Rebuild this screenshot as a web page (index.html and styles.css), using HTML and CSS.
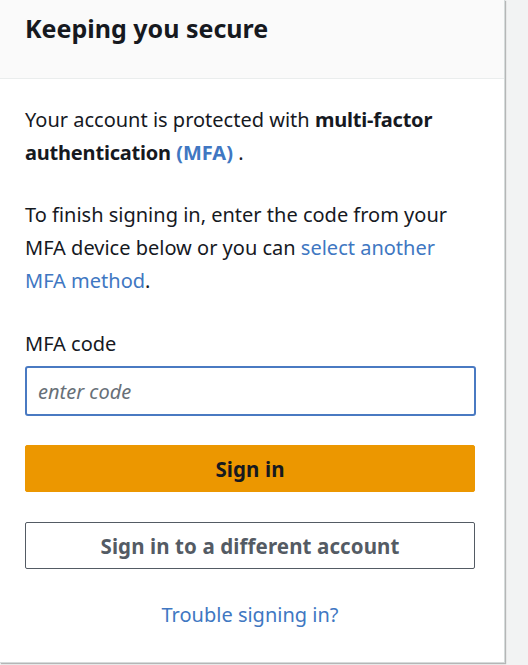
FILE: index.html
```html
<!DOCTYPE html>
<html lang="en">
<head>
<meta charset="utf-8">
<title>Keeping you secure</title>
<link rel="stylesheet" href="styles.css">
</head>
<body>
<div class="card">
  <div class="card-header">
    <h1 class="title">Keeping you secure</h1>
  </div>
  <div class="card-body">
    <p class="text">Your account is protected with <b class="strong">multi-factor authentication</b> <a class="link bold" href="#">(MFA)</a> .</p>
    <p class="text">To finish signing in, enter the code from your MFA device below or you can <a class="link" href="#">select another MFA method</a>.</p>
    <label class="label" for="code">MFA code</label>
    <input id="code" class="input" type="text" placeholder="enter code">
    <button class="btn btn-primary" type="button">Sign in</button>
    <button class="btn btn-secondary" type="button">Sign in to a different account</button>
    <div class="trouble"><a class="link" href="#">Trouble signing in?</a></div>
  </div>
</div>
</body>
</html>
```

FILE: styles.css
```css
html, body {
  margin: 0;
  padding: 0;
}
body {
  background: #f2f3f3;
  font-family: "Noto Sans", "Open Sans", sans-serif;
  color: #16191f;
  width: 528px;
  height: 665px;
  overflow: hidden;
}
.card {
  width: 505px;
  height: 663px;
  box-sizing: border-box;
  background: #ffffff;
  border-right: 1px solid #d5dbdb;
  border-bottom: 1px solid #d5dbdb;
  box-shadow: 1px 1px 1px rgba(0,0,0,0.25);
}
.card-header {
  background: #fafafa;
  border-bottom: 1px solid #eaeded;
  height: 78px;
  padding: 0 25px;
}
.title {
  margin: 0;
  padding-top: 11px;
  font-size: 25px;
  line-height: 34px;
  font-weight: 700;
  color: #16191f;
}
.card-body {
  padding: 24px 28px 0 25px;
  display: flex;
  flex-direction: column;
}
.text {
  margin: 0 0 29px 0;
  font-size: 20px;
  line-height: 33px;
}
.strong {
  font-weight: 700;
  letter-spacing: -0.2px;
}
.link {
  color: #4077c2;
  text-decoration: none;
}
.bold {
  font-weight: 700;
}
.label {
  font-size: 20px;
  line-height: 28px;
  margin-top: 4px;
  margin-bottom: 8px;
}
.input {
  box-sizing: border-box;
  height: 50px;
  width: 451px;
  border: 2px solid #4a7ac2;
  border-radius: 3px;
  padding: 0 11px;
  font-family: "Noto Sans", "Open Sans", sans-serif;
  font-size: 20px;
  outline: none;
}
.input::placeholder {
  color: #687078;
  font-style: italic;
}
.btn {
  box-sizing: border-box;
  width: 450px;
  font-family: "Noto Sans", "Open Sans", sans-serif;
  font-size: 20.5px;
  font-weight: 700;
  letter-spacing: 0.1px;
  border-radius: 2px;
  cursor: pointer;
}
.btn-primary {
  margin-top: 29px;
  height: 47px;
  background: #ec9700;
  border: 1px solid #ec9700;
  color: #16191f;
}
.btn-secondary {
  margin-top: 30px;
  height: 47px;
  background: #ffffff;
  border: 1px solid #545b64;
  color: #545b64;
}
.trouble {
  width: 450px;
  text-align: center;
  margin-top: 32px;
  font-size: 20px;
  line-height: 28px;
}
```
